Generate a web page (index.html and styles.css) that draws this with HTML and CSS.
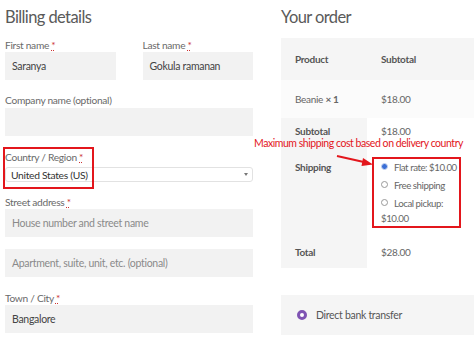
FILE: index.html
```html
<!DOCTYPE html>
<html>
<head>
<meta charset="utf-8">
<link rel="stylesheet" href="styles.css">
</head>
<body>
<div class="page">
  <div class="billing">
    <h3 class="title">Billing details</h3>
    <div class="row-pair">
      <div class="field half">
        <label>First name <abbr>*</abbr></label>
        <div class="input">Saranya</div>
      </div>
      <div class="field half">
        <label>Last name <abbr>*</abbr></label>
        <div class="input">Gokula ramanan</div>
      </div>
    </div>
    <div class="field company">
      <label>Company name (optional)</label>
      <div class="input"></div>
    </div>
    <div class="field country">
      <label>Country / Region <abbr>*</abbr></label>
      <div class="select"><span>United States (US)</span><span class="caret"></span></div>
    </div>
    <div class="field street">
      <label>Street address <abbr>*</abbr></label>
      <div class="input placeholder">House number and street name</div>
      <div class="input placeholder apt">Apartment, suite, unit, etc. (optional)</div>
    </div>
    <div class="field">
      <label>Town / City <abbr>*</abbr></label>
      <div class="input">Bangalore</div>
    </div>
  </div>
  <div class="order">
    <h3 class="title">Your order</h3>
    <table class="order-table">
      <tr class="head"><th>Product</th><th>Subtotal</th></tr>
      <tr class="item"><td>Beanie <strong>× 1</strong></td><td>$18.00</td></tr>
      <tr class="sub"><th>Subtotal</th><td>$18.00</td></tr>
      <tr class="ship"><th>Shipping</th><td>
        <ul class="methods">
          <li><span class="radio checked"></span>Flat rate: $10.00</li>
          <li><span class="radio"></span>Free shipping</li>
          <li><span class="radio"></span>Local pickup: $10.00</li>
        </ul>
      </td></tr>
      <tr class="total"><th>Total</th><td>$28.00</td></tr>
    </table>
    <div class="payment"><span class="pradio"></span>Direct bank transfer</div>
  </div>
</div>
<div class="mark mark-country"></div>
<div class="mark mark-ship"></div>
<div class="note">Maximum shipping cost based on delivery country</div>
<svg class="arrow" width="40" height="14" viewBox="0 0 40 14">
  <line x1="1" y1="2" x2="30" y2="8.5" stroke="#e3161c" stroke-width="2"/>
  <polygon points="37,10.5 27,4 25.5,12" fill="#e3161c"/>
</svg>
</body>
</html>
```
FILE: styles.css
```css
html, body { margin: 0; padding: 0; }
body {
  width: 474px; height: 348px; overflow: hidden; position: relative;
  background: #fff;
  font-family: "Lato", "Open Sans", sans-serif;
  color: #555;
  letter-spacing: -0.3px;
}
.page { display: flex; padding-left: 5px; gap: 28px; }
.billing { width: 248px; flex: none; }
.order { width: 200px; flex: none; }
.title {
  margin: 0; padding-top: 6px; height: 32px;
  font-size: 16.5px; line-height: 22px; font-weight: 400; color: #5a5a5a;
  letter-spacing: -0.6px;
}
.row-pair { display: flex; gap: 27px; }
.half { width: 111px; }
.field { margin-bottom: 13px; }
.field label {
  display: block; font-size: 10.2px; line-height: 14px; color: #6a6a6a;
}
abbr { color: #c33; text-decoration: underline dotted; text-decoration-color: #c33; }
.input {
  height: 28px; background: #f2f2f2; box-sizing: border-box;
  padding-left: 7px; font-size: 10.5px; line-height: 28px; color: #444;
}
.company .input { margin-top: 1px; }
.company { margin-bottom: 14px; }
.placeholder { color: #8a8a8a; }
.apt { margin-top: 12px; }
.street { margin-bottom: 14px; }
.select {
  margin-top: 3px; height: 15px; box-sizing: border-box;
  border: 1px solid #e2e2e2; border-radius: 3px; background: #fff;
  display: flex; align-items: center; justify-content: space-between;
  padding: 0 4px 0 5px; font-size: 10.3px; color: #333;
}
.caret {
  width: 0; height: 0; border-left: 2px solid transparent; border-right: 2px solid transparent;
  border-top: 3px solid #777;
}
.order-table {
  width: 200px; border-collapse: collapse; table-layout: fixed; font-size: 10px; color: #666;
}
.order-table th, .order-table td {
  text-align: left; vertical-align: top; padding: 0 0 0 14px; line-height: 14px;
}
.order-table th { font-weight: 700; color: #555; }
.order-table tr > :first-child { width: 72px; }
.head th { background: #f5f5f5; padding-top: 14px; padding-bottom: 14px; }
.item td { background: #fbfbfb; padding-top: 12px; padding-bottom: 12px; }
.item strong { font-weight: 700; }
.sub th, .ship th, .total th { background: #f5f5f5; }
.sub th, .sub td { padding-top: 6px; padding-bottom: 12px; }
.ship th, .ship td { padding-top: 10px; padding-bottom: 6px; }
.total th, .total td { padding-top: 13px; padding-bottom: 9px; }
.methods { list-style: none; margin: 0; padding: 0; width: 80px; letter-spacing: -0.45px; font-size: 9.7px; }
.methods li { line-height: 15px; margin-bottom: 3px; }
.methods li:last-child { margin-bottom: 0; }
.radio {
  display: inline-block; width: 5px; height: 5px; border: 1px solid #999; border-radius: 50%;
  margin: 0 6px 0 0; vertical-align: 1px; background: #fff;
}
.radio.checked { background: #3b6fd6; border-color: #c9d6f0; }
.payment {
  margin-top: 27px; height: 40px; background: #f5f5f5;
  display: flex; align-items: center; padding-left: 16px;
  font-size: 10.5px; color: #555;
}
.pradio {
  width: 4px; height: 4px; border: 3px solid #7f54b3; border-radius: 50%; background: #fff;
  margin-right: 9px;
}
.mark { position: absolute; border: 2px solid #e3161c; box-sizing: border-box; }
.mark-country { left: 3px; top: 147px; width: 91px; height: 42px; }
.mark-ship { left: 372px; top: 157px; width: 89px; height: 71px; }
.note {
  position: absolute; left: 254px; top: 136px; font-size: 10.5px; line-height: 14px;
  color: #e3161c; white-space: nowrap; letter-spacing: -0.45px;
}
.arrow { position: absolute; left: 336px; top: 154px; }
```
